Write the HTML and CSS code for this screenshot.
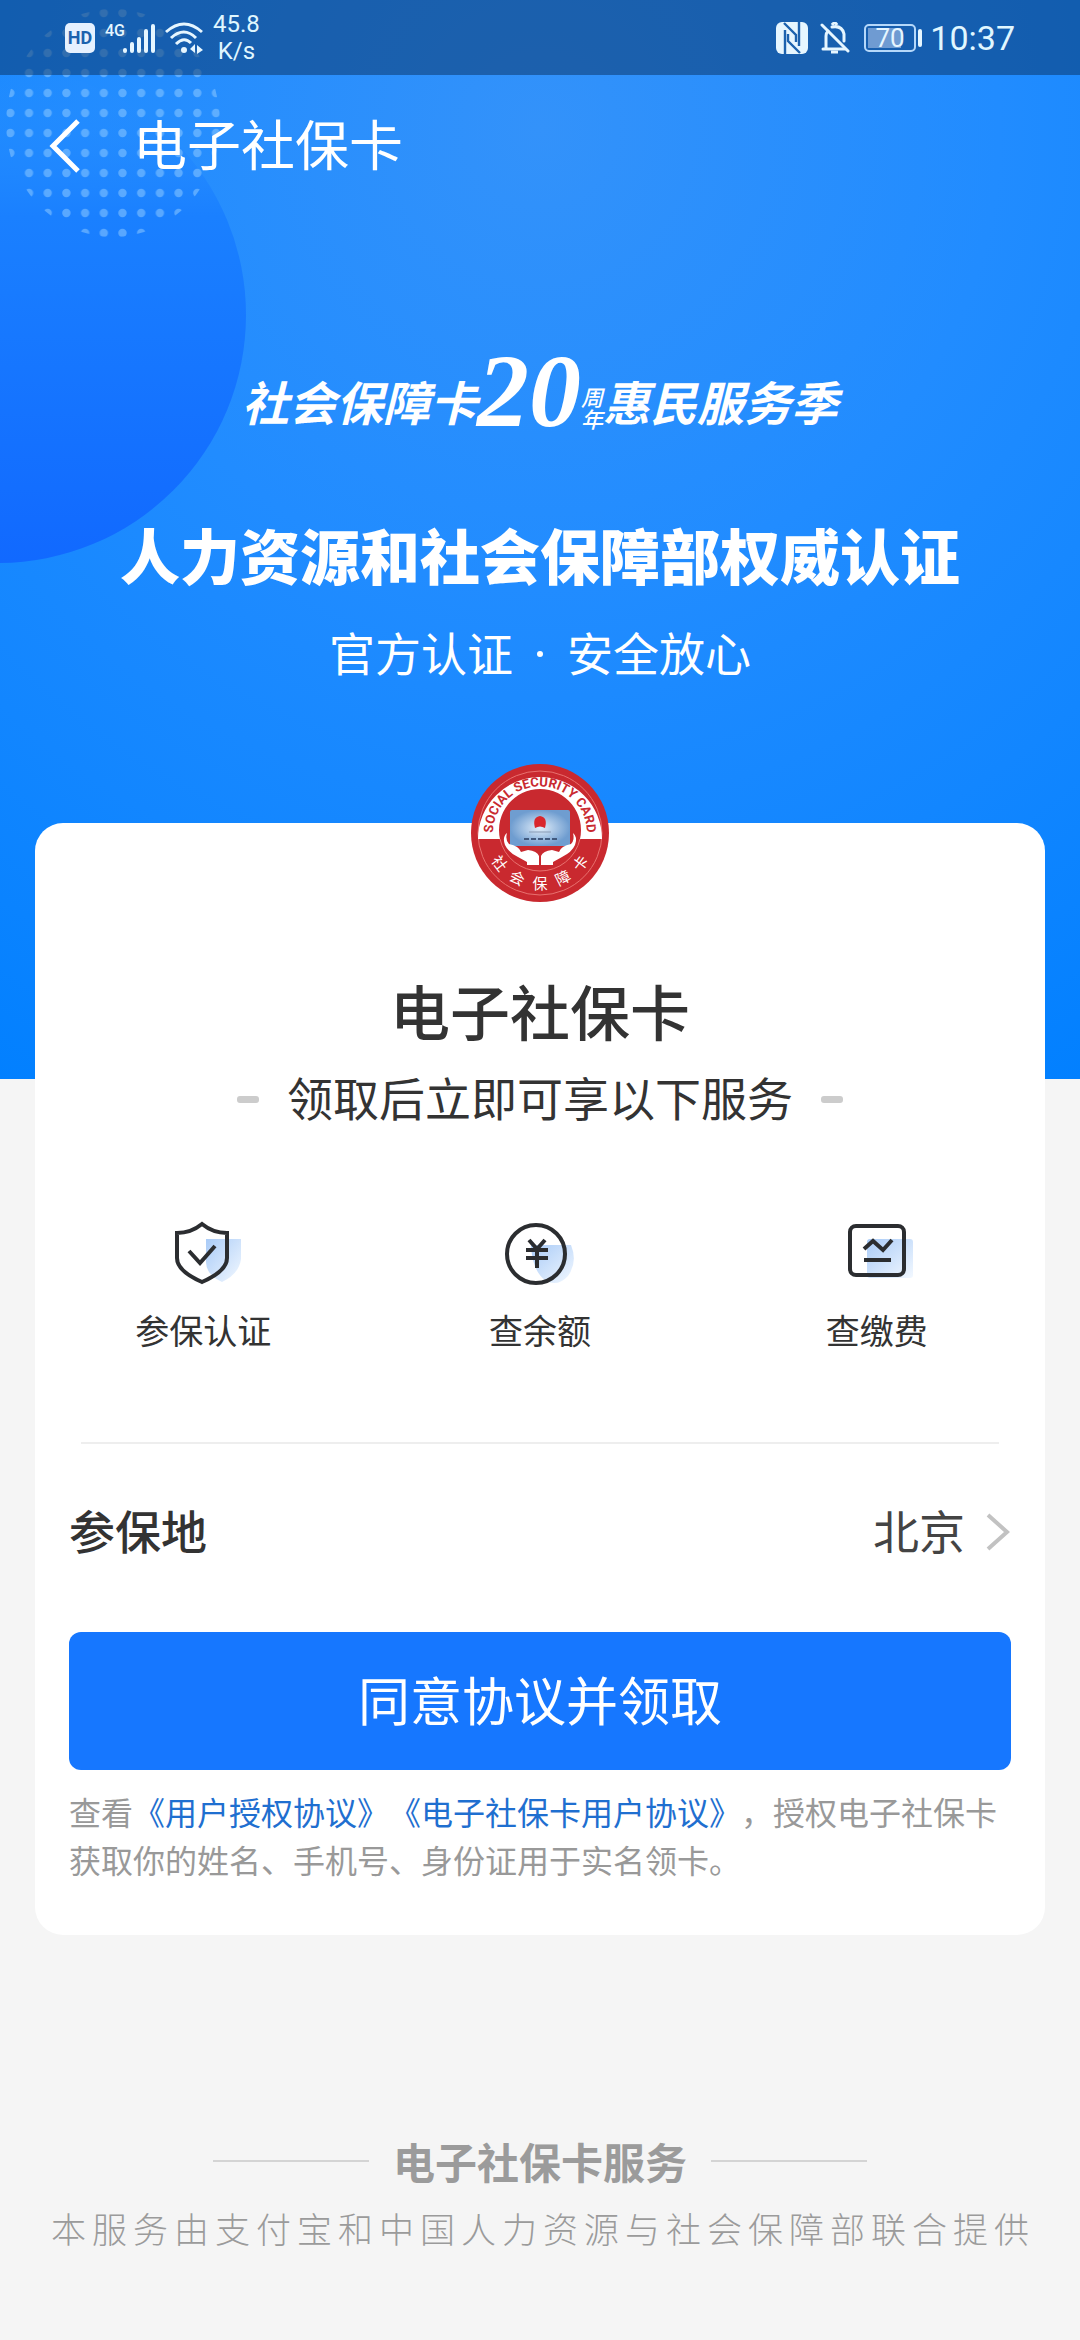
FILE: index.html
```
<!DOCTYPE html>
<html lang="zh-CN">
<head>
    <meta charset="UTF-8">
    <meta name="viewport" content="width=device-width, initial-scale=1.0">
    <title>电子社保卡</title>
    <link rel="stylesheet" href="styles.css">
</head>
<body>
    <section class="hero">
        <svg class="hero-decor" width="260" height="570" viewBox="0 0 260 570" aria-hidden="true">
            <defs>
                <linearGradient id="ball" x1="0" y1="0" x2="0" y2="1">
                    <stop offset="0" stop-color="#2a90ff" stop-opacity="0"/>
                    <stop offset="0.3" stop-color="#1a80ff"/>
                    <stop offset="1" stop-color="#1169ff"/>
                </linearGradient>
                <pattern id="dots" x="1" y="3" width="18.7" height="20" patternUnits="userSpaceOnUse">
                    <circle cx="9.3" cy="10" r="4.2" fill="#8cc8ff" fill-opacity="0.55"/>
                </pattern>
            </defs>
            <circle cx="-2" cy="315" r="248" fill="url(#ball)"/>
            <ellipse cx="113" cy="123" rx="107" ry="114" fill="url(#dots)"/>
        </svg>

        <div class="status-bar">
            <div class="status-group">
                <svg width="30" height="30" viewBox="0 0 30 30" role="img" aria-label="HD">
                    <rect width="30" height="30" rx="5" fill="#e6f1ff"/>
                    <text x="15" y="21" text-anchor="middle" class="hd-text">HD</text>
                </svg>
                <svg class="signal" width="52" height="32" viewBox="0 0 52 32" role="img" aria-label="4G">
                    <text x="0" y="14" class="g-text">4G</text>
                    <g stroke="#e6f6ff" stroke-width="4" stroke-linecap="round">
                        <path d="M20 29v-1M27 29v-7M34 29v-12M41 29V9M48 29V4"/>
                    </g>
                </svg>
                <svg class="wifi" width="38" height="32" viewBox="0 0 38 32" aria-hidden="true">
                    <g fill="none" stroke="#e6f6ff" stroke-width="3">
                        <path d="M1 10Q19-6 37 10"/>
                        <path d="M6 16Q19 4 31 16"/>
                        <path d="M11 22Q19 14 26 21"/>
                    </g>
                    <circle cx="19" cy="28" r="3" fill="#e6f6ff"/>
                    <path d="M25 27l5-5v9zM32 23l6 5-6 4z" fill="#e6f6ff"/>
                </svg>
                <span class="speed">45.8<br>K/s</span>
            </div>
            <div class="status-group">
                <svg width="32" height="32" viewBox="0 0 32 32" aria-hidden="true">
                    <rect width="32" height="32" rx="6" fill="#e6f6ff"/>
                    <g fill="none" stroke="#1c62ae" stroke-width="2.4">
                        <path d="M9 32V8M8 1l12 12v7"/>
                        <path d="M23 0v24M24 31L12 19v-7"/>
                    </g>
                </svg>
                <svg class="bell" width="30" height="32" viewBox="0 0 30 32" fill="none" stroke="#e6f6ff" stroke-width="3" aria-hidden="true">
                    <path d="M3 27h22M6 26V14q0-3 2-5M12 5q10-2 12 7v7" stroke-linecap="round"/>
                    <path d="M12 3q3-4 5 0"/>
                    <path d="M2 3l26 26" stroke-linecap="round"/>
                    <path d="M11 30h7"/>
                </svg>
                <svg class="battery" width="58" height="28" viewBox="0 0 58 28" role="img" aria-label="电量 70">
                    <rect x="1" y="1" width="50" height="26" rx="4" fill="none" stroke="#b5d8fa" stroke-width="2"/>
                    <rect x="4" y="4" width="33" height="20" fill="#6f9bd2"/>
                    <path d="M56 7v14" stroke="#e6f6ff" stroke-width="4" stroke-linecap="round"/>
                    <text x="26" y="23" text-anchor="middle" class="battery-text">70</text>
                </svg>
                <span class="clock">10:37</span>
            </div>
        </div>

        <header class="nav-bar">
            <button type="button" class="back-btn" aria-label="返回">
                <svg width="32" height="54" viewBox="0 0 32 54" fill="none" stroke="#fff" stroke-width="5">
                    <path d="M30 2L5 27l25 25"/>
                </svg>
            </button>
            <h1 class="nav-title">电子社保卡</h1>
        </header>

        <div class="campaign">
            <span class="campaign-text">社会保障卡</span>
            <span class="campaign-year">20</span>
            <span class="campaign-unit">周<br>年</span>
            <span class="campaign-text">惠民服务季</span>
        </div>
        <h2 class="hero-title">人力资源和社会保障部权威认证</h2>
        <p class="hero-subtitle"><span>官方认证</span><i class="dot"></i><span>安全放心</span></p>
    </section>

    <main class="card">
        <svg class="emblem" width="138" height="138" viewBox="0 0 138 138" role="img" aria-label="社会保障卡">
            <defs>
                <path id="arc-top" d="M23 79A47 47 0 1 1 115 79"/>
                <radialGradient id="chip">
                    <stop offset="0" stop-color="#e2eefa"/>
                    <stop offset="1" stop-color="#6f9dd0"/>
                </radialGradient>
            </defs>
            <circle cx="69" cy="69" r="69" fill="#c9292f"/>
            <circle cx="69" cy="69" r="62" fill="none" stroke="#e8716f"/>
            <path d="M7 75A62 62 0 1 1 131 75H109A41 41 0 1 0 29 75z" fill="#fff"/>
            <path d="M29 75A41 41 0 0 0 109 75" fill="none" stroke="#e8716f"/>
            <text class="emblem-en"><textPath href="#arc-top" startOffset="50%" text-anchor="middle">SOCIAL SECURITY CARD</textPath></text>
            <rect x="39" y="46" width="60" height="36" rx="2" fill="url(#chip)"/>
            <path d="M64 64q-3-11 5-12 8 1 5 12-5-3-10 0z" fill="#d9262c"/>
            <path d="M58 68h22" stroke="#8a9cb5"/>
            <path d="M53 75h33" stroke="#41597e" stroke-width="2" stroke-dasharray="5 2"/>
            <path d="M36 69q-5 4-2 12 3 7 13 12l9 5v3h12V92q-2-5-11-6l-7 2q-2-6-12-8-4-4-2-11z" fill="#fff"/>
            <path d="M102 69q5 4 2 12-3 7-13 12l-9 5v3H70V92q2-5 11-6l7 2q2-6 12-8 4-4 2-11z" fill="#fff"/>
            <g class="emblem-cn">
                <text x="69" y="125" transform="rotate(53 69 69)">社</text>
                <text x="69" y="125" transform="rotate(27 69 69)">会</text>
                <text x="69" y="125">保</text>
                <text x="69" y="125" transform="rotate(-27 69 69)">障</text>
                <text x="69" y="125" transform="rotate(-53 69 69)">卡</text>
            </g>
        </svg>

        <h2 class="card-title">电子社保卡</h2>
        <p class="card-subtitle">领取后立即可享以下服务</p>

        <ul class="services">
            <li class="service-item">
                <svg width="80" height="68" viewBox="0 0 80 68" fill="none" aria-hidden="true">
                    <defs>
                        <linearGradient id="tint" x1="0" y1="0" x2="1" y2="1">
                            <stop offset="0" stop-color="#a9cbf7"/>
                            <stop offset="1" stop-color="#f2f8ff"/>
                        </linearGradient>
                    </defs>
                    <path d="M43 19h35v20q-2 15-19 23-16-7-16-20z" fill="url(#tint)"/>
                    <path d="M39 4q11 9 25 9v25q0 13-25 24Q14 51 14 38V13q14 0 25-9z" stroke="#2b2d30" stroke-width="4"/>
                    <path d="M26 31l11 12 15-17" stroke="#2b2d30" stroke-width="4"/>
                </svg>
                <span>参保认证</span>
            </li>
            <li class="service-item">
                <svg width="80" height="68" viewBox="0 0 80 68" fill="none" aria-hidden="true">
                    <path d="M31 25h40q7 17-3 31-10 11-22 5-14-10-15-36z" fill="url(#tint)"/>
                    <circle cx="36" cy="34" r="29" stroke="#2b2d30" stroke-width="4"/>
                    <path d="M29 20l8 9 8-9M37 29v19M26 30h22M26 38h22" stroke="#2b2d30" stroke-width="4"/>
                </svg>
                <span>查余额</span>
            </li>
            <li class="service-item">
                <svg width="80" height="68" viewBox="0 0 80 68" fill="none" aria-hidden="true">
                    <rect x="30" y="19" width="46" height="39" rx="3" fill="url(#tint)"/>
                    <rect x="13" y="6" width="54" height="49" rx="6" stroke="#2b2d30" stroke-width="4"/>
                    <path d="M27 29l9-8 10 9 9-10M27 40h27" stroke="#2b2d30" stroke-width="4"/>
                </svg>
                <span>查缴费</span>
            </li>
        </ul>

        <form class="claim-form">
            <button type="button" class="region-row">
                <span class="region-label">参保地</span>
                <span class="region-value">北京
                    <svg class="arrow" width="26" height="38" viewBox="0 0 26 38" fill="none" stroke="#c2c2c2" stroke-width="4" aria-hidden="true">
                        <path d="M3 2l19 17L3 36"/>
                    </svg>
                </span>
            </button>
            <button type="submit" class="submit-btn">同意协议并领取</button>
            <p class="terms">查看<a href="#">《用户授权协议》</a><a href="#">《电子社保卡用户协议》</a>，授权电子社保卡<br>获取你的姓名、手机号、身份证用于实名领卡。</p>
        </form>
    </main>

    <footer class="footer">
        <h3 class="footer-title">电子社保卡服务</h3>
        <p class="footer-note">本服务由支付宝和中国人力资源与社会保障部联合提供</p>
    </footer>
</body>
</html>
```
FILE: styles.css
```
* {
    margin: 0;
    padding: 0;
    box-sizing: border-box;
}

body {
    font-family: "Noto Sans CJK SC", sans-serif;
    background: #f5f5f5;
    color: #333;
}

svg {
    display: block;
    flex-shrink: 0;
}

button {
    font-family: inherit;
    border: none;
    background: none;
    cursor: pointer;
}

/* 顶部 */
.hero {
    position: relative;
    padding-bottom: 398px;
    color: #fff;
    background: radial-gradient(circle at 50% 12%, #3392fa 0%, #218cff 42%, #1286ff 72%, #0280ff 100%);
}

.hero-decor {
    position: absolute;
    top: 0;
    left: 0;
}

.status-bar {
    position: relative;
    display: flex;
    justify-content: space-between;
    align-items: center;
    height: 75px;
    padding: 0 65px;
    background: rgba(8, 48, 96, 0.5);
    font-family: Roboto, sans-serif;
    color: #e0f7ff;
}

.status-group {
    display: flex;
    align-items: center;
}

.hd-text {
    font-size: 18px;
    font-weight: 700;
    fill: #1c62ae;
}

.g-text {
    font-size: 16px;
    font-weight: 500;
    fill: #e6f6ff;
}

.signal {
    margin-left: 10px;
}

.wifi {
    margin-left: 8px;
}

.speed {
    margin-left: 10px;
    font-size: 24px;
    line-height: 27px;
    text-align: center;
}

.bell {
    margin-left: 12px;
}

.battery {
    margin-left: 14px;
}

.battery-text {
    font-size: 26px;
    fill: #e6f6ff;
}

.clock {
    margin-left: 8px;
    font-size: 34px;
}

.nav-bar {
    position: relative;
    display: flex;
    align-items: center;
    padding: 28px 48px 32px;
}

.back-btn {
    margin-top: 6px;
}

.nav-title {
    margin-left: 53px;
    font-size: 54px;
    font-weight: 400;
    line-height: 80px;
}

.campaign {
    position: relative;
    display: flex;
    justify-content: center;
    align-items: flex-end;
    margin-top: 138px;
    font-style: italic;
    font-weight: 700;
}

.campaign-text {
    font-size: 47px;
    line-height: 56px;
}

.campaign-year {
    font-family: "Liberation Serif", serif;
    font-size: 104px;
    line-height: 76px;
}

.campaign-unit {
    font-size: 22px;
    font-weight: 500;
    line-height: 22px;
}

.hero-title {
    position: relative;
    margin-top: 89px;
    font-size: 60px;
    font-weight: 900;
    line-height: 72px;
    text-align: center;
}

.hero-subtitle {
    display: flex;
    justify-content: center;
    align-items: center;
    gap: 24px;
    margin-top: 31px;
    font-size: 46px;
    font-weight: 400;
    line-height: 60px;
}

.dot {
    width: 6px;
    height: 6px;
    margin-top: 6px;
    border-radius: 50%;
    background: #fff;
}

/* 领卡卡片 */
.card {
    position: relative;
    margin: -256px 35px 0;
    padding: 147px 0 52px;
    background: #fff;
    border-radius: 28px;
}

.emblem {
    position: absolute;
    top: -59px;
    left: 50%;
    transform: translateX(-50%);
}

.emblem-en {
    font-family: Roboto, sans-serif;
    font-size: 13px;
    font-weight: 700;
    fill: #c9292f;
}

.emblem-cn {
    font-size: 15px;
    fill: #fff;
    text-anchor: middle;
}

.card-title {
    font-size: 60px;
    font-weight: 500;
    line-height: 80px;
    text-align: center;
}

.card-subtitle {
    display: flex;
    justify-content: center;
    align-items: center;
    gap: 28px;
    margin-top: 16px;
    font-size: 46px;
    line-height: 60px;
}

.card-subtitle::before,
.card-subtitle::after {
    content: "";
    width: 22px;
    height: 7px;
    margin-top: 6px;
    border-radius: 3px;
    background: #ccc;
}

.services {
    display: grid;
    grid-template-columns: repeat(3, 1fr);
    margin-top: 94px;
    list-style: none;
}

.service-item {
    display: flex;
    flex-direction: column;
    align-items: center;
    gap: 18px;
    font-size: 34px;
    line-height: 48px;
}

.claim-form {
    padding: 0 34px;
}

.region-row {
    display: flex;
    justify-content: space-between;
    align-items: center;
    width: 100%;
    margin-top: 88px;
    padding: 57px 0 73px;
    font-size: 46px;
    line-height: 60px;
    color: #333;
    /* 分割线两端比按钮略短 */
    background: linear-gradient(#eee, #eee) no-repeat center top / calc(100% - 24px) 2px;
}

.region-label {
    font-weight: 500;
}

.region-value {
    display: flex;
    align-items: center;
    gap: 20px;
    color: #444;
}

.arrow {
    margin-top: 6px;
}

.submit-btn {
    width: 100%;
    padding: 31px 0 35px;
    border-radius: 12px;
    background: #1677ff;
    color: #fff;
    font-size: 52px;
    line-height: 72px;
}

.terms {
    margin-top: 17px;
    font-size: 32px;
    line-height: 48px;
    color: #999;
    /* 标点保持全角宽度 */
    text-spacing-trim: space-all;
}

.terms a {
    color: #1f6fd0;
    text-decoration: none;
}

/* 页脚 */
.footer {
    margin-top: 196px;
    padding-bottom: 80px;
    color: #9b9b9b;
}

.footer-title {
    display: flex;
    justify-content: center;
    align-items: center;
    gap: 24px;
    font-size: 42px;
    font-weight: 700;
    line-height: 60px;
}

.footer-title::before,
.footer-title::after {
    content: "";
    width: 156px;
    height: 2px;
    background: #d4d4d4;
}

.footer-note {
    margin-top: 13px;
    font-size: 35px;
    font-weight: 300;
    line-height: 48px;
    letter-spacing: 6px;
    text-indent: 6px;
    text-align: center;
}
```
